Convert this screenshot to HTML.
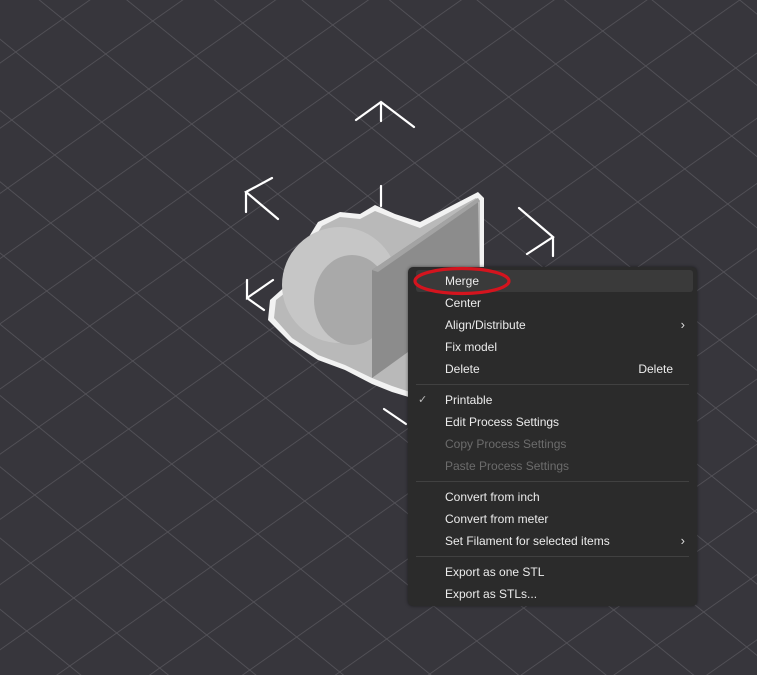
<!DOCTYPE html>
<html><head><meta charset="utf-8"><style>
html,body{margin:0;padding:0;width:757px;height:675px;overflow:hidden;background:#37363c;font-family:"Liberation Sans",sans-serif}
svg{position:absolute;left:0;top:0}
.menu{position:absolute;left:408px;top:267px;width:289px;height:339px;background:#2b2b2b;border-radius:5px;box-shadow:0 0 3px rgba(0,0,0,.5)}
.it{position:absolute;left:37px;height:22px;line-height:22px;font-size:12px;color:#ececec;white-space:nowrap}
.dis{color:#6c6c6c}
.sep{position:absolute;left:8px;right:8px;height:1px;background:#414141}
.r{position:absolute;right:24px;font-size:12px;color:#ececec;line-height:22px}
.ch{position:absolute;right:12px;font-size:13px;color:#ddd;line-height:22px}
</style></head><body>
<svg width="757" height="675">
<defs>
<pattern id="g" patternUnits="userSpaceOnUse" width="100" height="100" patternTransform="matrix(0.43 0.35 0.47 -0.33 167 532)">
<path d="M0 0H100M0 0V100" stroke="#55545a" stroke-width="3" fill="none"/>
</pattern>
</defs>
<rect width="757" height="675" fill="url(#g)"/>
<g fill="#f2f2f2">
<path d="M270 300 L290 282 L300 250 L310 235 L318 222 L340 212 L360 214 L375 205 L395 214 L420 222 L478 192 L484 198 L484 300 L420 380 L412 398 L392 392 L372 384 L345 370 L318 360 L290 342 L268 320 Z"/>
</g>
<g fill="#b9b9b9">
<path d="M276 300 L294 286 L304 252 L314 238 L322 226 L340 217 L360 219 L375 211 L395 219 L420 228 L476 198 L480 201 L480 300 L418 375 L410 392 L392 386 L372 378 L345 365 L318 355 L292 338 L274 318 Z"/>
</g>
<circle cx="340" cy="285" r="58" fill="#c6c6c6"/>
<ellipse cx="352" cy="300" rx="38" ry="45" fill="#a9a9a9"/>
<path d="M372 270 L478 198 L480 300 L372 378 Z" fill="#8c8c8c"/>
<path d="M372 270 L478 198 L480 201 L378 272 Z" fill="#a3a3a3"/>
<g stroke="#fff" stroke-width="2.2" fill="none" stroke-linecap="round">
<path d="M356 120 L381 102 L414 127 M381 102 V121"/>
<path d="M272 178 L246 192 L278 219 M246 192 V212"/>
<path d="M519 208 L553 237 L527 254 M553 237 V256"/>
<path d="M247 280 V298 L273 280 M247 298 L264 310"/>
<path d="M381 186 V206"/>
<path d="M384 409 L406 424"/>
</g>
</svg>
<div class="menu">
<div style="position:absolute;left:8px;right:4px;top:3px;height:22px;background:#3a3a3a;border-radius:3px"></div>
<div class="it" style="top:3px">Merge</div>
<div class="it" style="top:25px">Center</div>
<div class="it" style="top:47px">Align/Distribute</div><div class="ch" style="top:47px">›</div>
<div class="it" style="top:69px">Fix model</div>
<div class="it" style="top:91px">Delete</div><div class="r" style="top:91px">Delete</div>
<div class="sep" style="top:117px"></div>
<div class="it" style="top:122px;left:10px;font-size:11px;color:#bbb">✓</div>
<div class="it" style="top:122px">Printable</div>
<div class="it" style="top:144px">Edit Process Settings</div>
<div class="it dis" style="top:166px">Copy Process Settings</div>
<div class="it dis" style="top:188px">Paste Process Settings</div>
<div class="sep" style="top:214px"></div>
<div class="it" style="top:219px">Convert from inch</div>
<div class="it" style="top:241px">Convert from meter</div>
<div class="it" style="top:263px">Set Filament for selected items</div><div class="ch" style="top:263px">›</div>
<div class="sep" style="top:289px"></div>
<div class="it" style="top:294px">Export as one STL</div>
<div class="it" style="top:316px">Export as STLs...</div>
</div>
<svg width="757" height="675" style="pointer-events:none">
<ellipse cx="462" cy="281" rx="47" ry="12.5" fill="none" stroke="#d4141e" stroke-width="3.2"/>
</svg>
</body></html>
